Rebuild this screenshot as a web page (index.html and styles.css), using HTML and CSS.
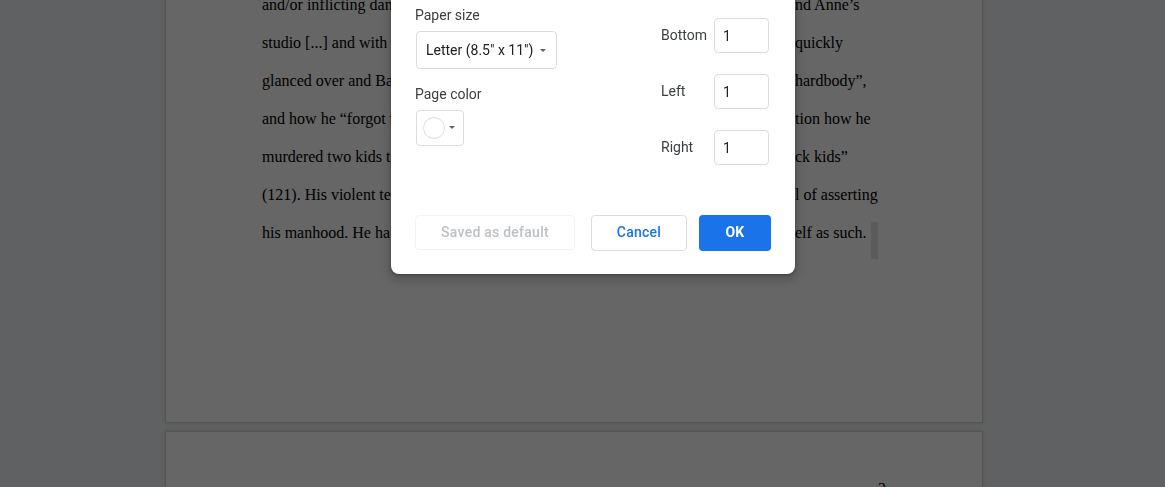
FILE: index.html
```html
<!DOCTYPE html>
<html lang="en">
<head>
<meta charset="utf-8">
<title>Page setup</title>
<link rel="stylesheet" href="styles.css">
</head>
<body>
<div class="scroller">
  <div class="page page-one">
    <div class="line"><span class="head">and/or inflicting dam</span><span class="tail">nd Anne’s</span></div>
    <div class="line"><span class="head">studio [...] and with</span><span class="tail">quickly</span></div>
    <div class="line"><span class="head">glanced over and Ba</span><span class="tail">hardbody”,</span></div>
    <div class="line"><span class="head">and how he “forgot t</span><span class="tail">tion how he</span></div>
    <div class="line"><span class="head">murdered two kids t</span><span class="tail">ck kids”</span></div>
    <div class="line"><span class="head">(121). His violent te</span><span class="tail">l of asserting</span></div>
    <div class="line"><span class="head">his manhood. He ha</span><span class="tail">elf as such.</span></div>
    <span class="marker"></span>
  </div>
  <div class="page page-two">
    <div class="header">2</div>
  </div>
</div>

<div class="overlay"></div>

<div class="dialog" role="dialog" aria-label="Page setup">
  <div class="dialog-body">
    <div class="col-left">
      <div class="label">Paper size</div>
      <div class="select"><span>Letter (8.5" x 11")</span><span class="caret"></span></div>
      <div class="label label-gap">Page color</div>
      <div class="color-btn"><span class="swatch"></span><span class="caret"></span></div>
    </div>
    <div class="col-right">
      <div class="margins">
        <span class="m-label">Bottom</span><input class="m-input" type="text" value="1">
        <span class="m-label">Left</span><input class="m-input" type="text" value="1">
        <span class="m-label">Right</span><input class="m-input" type="text" value="1">
      </div>
    </div>
  </div>
  <div class="actions">
    <button class="btn btn-default" type="button" disabled>Saved as default</button>
    <div class="btn-group">
      <button class="btn btn-cancel" type="button">Cancel</button>
      <button class="btn btn-ok" type="button">OK</button>
    </div>
  </div>
</div>
</body>
</html>
```

FILE: styles.css
```css
html, body {
  margin: 0;
  height: 100%;
  overflow: hidden;
}

body {
  background: #f1f3f4;
  font-family: "Liberation Serif", "Times New Roman", serif;
}

.scroller {
  display: flex;
  flex-direction: column;
  align-items: center;
  gap: 10px;
  margin-top: -14px;
  padding-right: 17px;
}

.page {
  position: relative;
  width: 816px;
  box-sizing: border-box;
  background: #fff;
  box-shadow: 0 0 0 0.75pt #d1d1d1, 0 0 3pt 0.75pt #cccccc;
  padding: 0 96px;
  color: #000;
  font-size: 16px;
}

.page-one {
  height: 436px;
}

.page-two {
  height: 1056px;
  padding-top: 48px;
}

.line {
  display: grid;
  grid-template-columns: 533px auto;
  height: 38px;
  line-height: 38px;
  white-space: nowrap;
}

.head {
  overflow: hidden;
}

.marker {
  position: absolute;
  left: 705px;
  top: 236px;
  width: 7px;
  height: 37px;
  background: #e4e4e4;
}

.header {
  text-align: right;
  line-height: 18.4px;
}

.overlay {
  position: fixed;
  inset: 0;
  background: rgba(0, 0, 0, 0.6);
}

.dialog {
  position: fixed;
  left: 391px;
  bottom: calc(100vh - 274px);
  width: 404px;
  box-sizing: border-box;
  padding: 24px 24px 23px;
  background: #fff;
  border-radius: 8px;
  box-shadow: 0 4px 8px 3px rgba(0, 0, 0, 0.15), 0 1px 3px rgba(0, 0, 0, 0.3);
  font-family: Roboto, "Liberation Sans", Arial, sans-serif;
  font-size: 14px;
  color: #3c4043;
}

.dialog-body {
  display: flex;
  justify-content: space-between;
  align-items: flex-end;
}

.col-left {
  padding-bottom: 19px;
}

.col-right {
  margin-right: 2px;
}

.label {
  line-height: 20px;
}

.label-gap {
  margin-top: 15px;
}

.select {
  margin: 6px 0 0 1px;
  width: 141px;
  height: 38px;
  box-sizing: border-box;
  border: 1px solid #dadce0;
  border-radius: 4px;
  display: flex;
  align-items: center;
  justify-content: space-between;
  padding: 0 10px 0 9px;
  color: #202124;
}

.caret {
  width: 0;
  height: 0;
  border-left: 3.5px solid transparent;
  border-right: 3.5px solid transparent;
  border-top: 3.5px solid #5f6368;
}

.color-btn {
  margin: 6px 0 0 1px;
  width: 48px;
  height: 36px;
  box-sizing: border-box;
  border: 1px solid #dadce0;
  border-radius: 4px;
  display: flex;
  align-items: center;
  gap: 4px;
  padding: 0 0 0 6px;
}

.color-btn .caret {
  margin-top: -1px;
}

.swatch {
  width: 22px;
  height: 22px;
  box-sizing: border-box;
  border: 1px solid #dadce0;
  border-radius: 50%;
  background: #fff;
}

.margins {
  display: grid;
  grid-template-columns: 53px 55px;
  row-gap: 21px;
  align-items: center;
}

.m-label {
  line-height: 20px;
  margin-bottom: 2px;
}

.m-input {
  width: 55px;
  height: 35px;
  box-sizing: border-box;
  border: 1px solid #dadce0;
  border-radius: 4px;
  padding: 0 8px;
  font: inherit;
  color: #202124;
  background: #fff;
  outline: none;
}

.actions {
  margin-top: 50px;
  display: flex;
  justify-content: space-between;
  align-items: flex-start;
}

.btn-group {
  display: flex;
  gap: 12px;
}

.btn {
  height: 36px;
  box-sizing: border-box;
  border-radius: 4px;
  font-family: Roboto, "Liberation Sans", Arial, sans-serif;
  font-size: 14px;
  font-weight: 500;
  letter-spacing: 0.25px;
  padding: 0 0 2px;
  cursor: pointer;
}

.btn-default {
  width: 160px;
  height: 35px;
  background: #fff;
  border: 1px solid #f1f3f4;
  color: #bdc1c6;
}

.btn-cancel {
  width: 96px;
  background: #fff;
  border: 1px solid #dadce0;
  color: #1a73e8;
}

.btn-ok {
  width: 72px;
  background: #1a73e8;
  border: none;
  color: #fff;
  font-weight: 700;
}
```
